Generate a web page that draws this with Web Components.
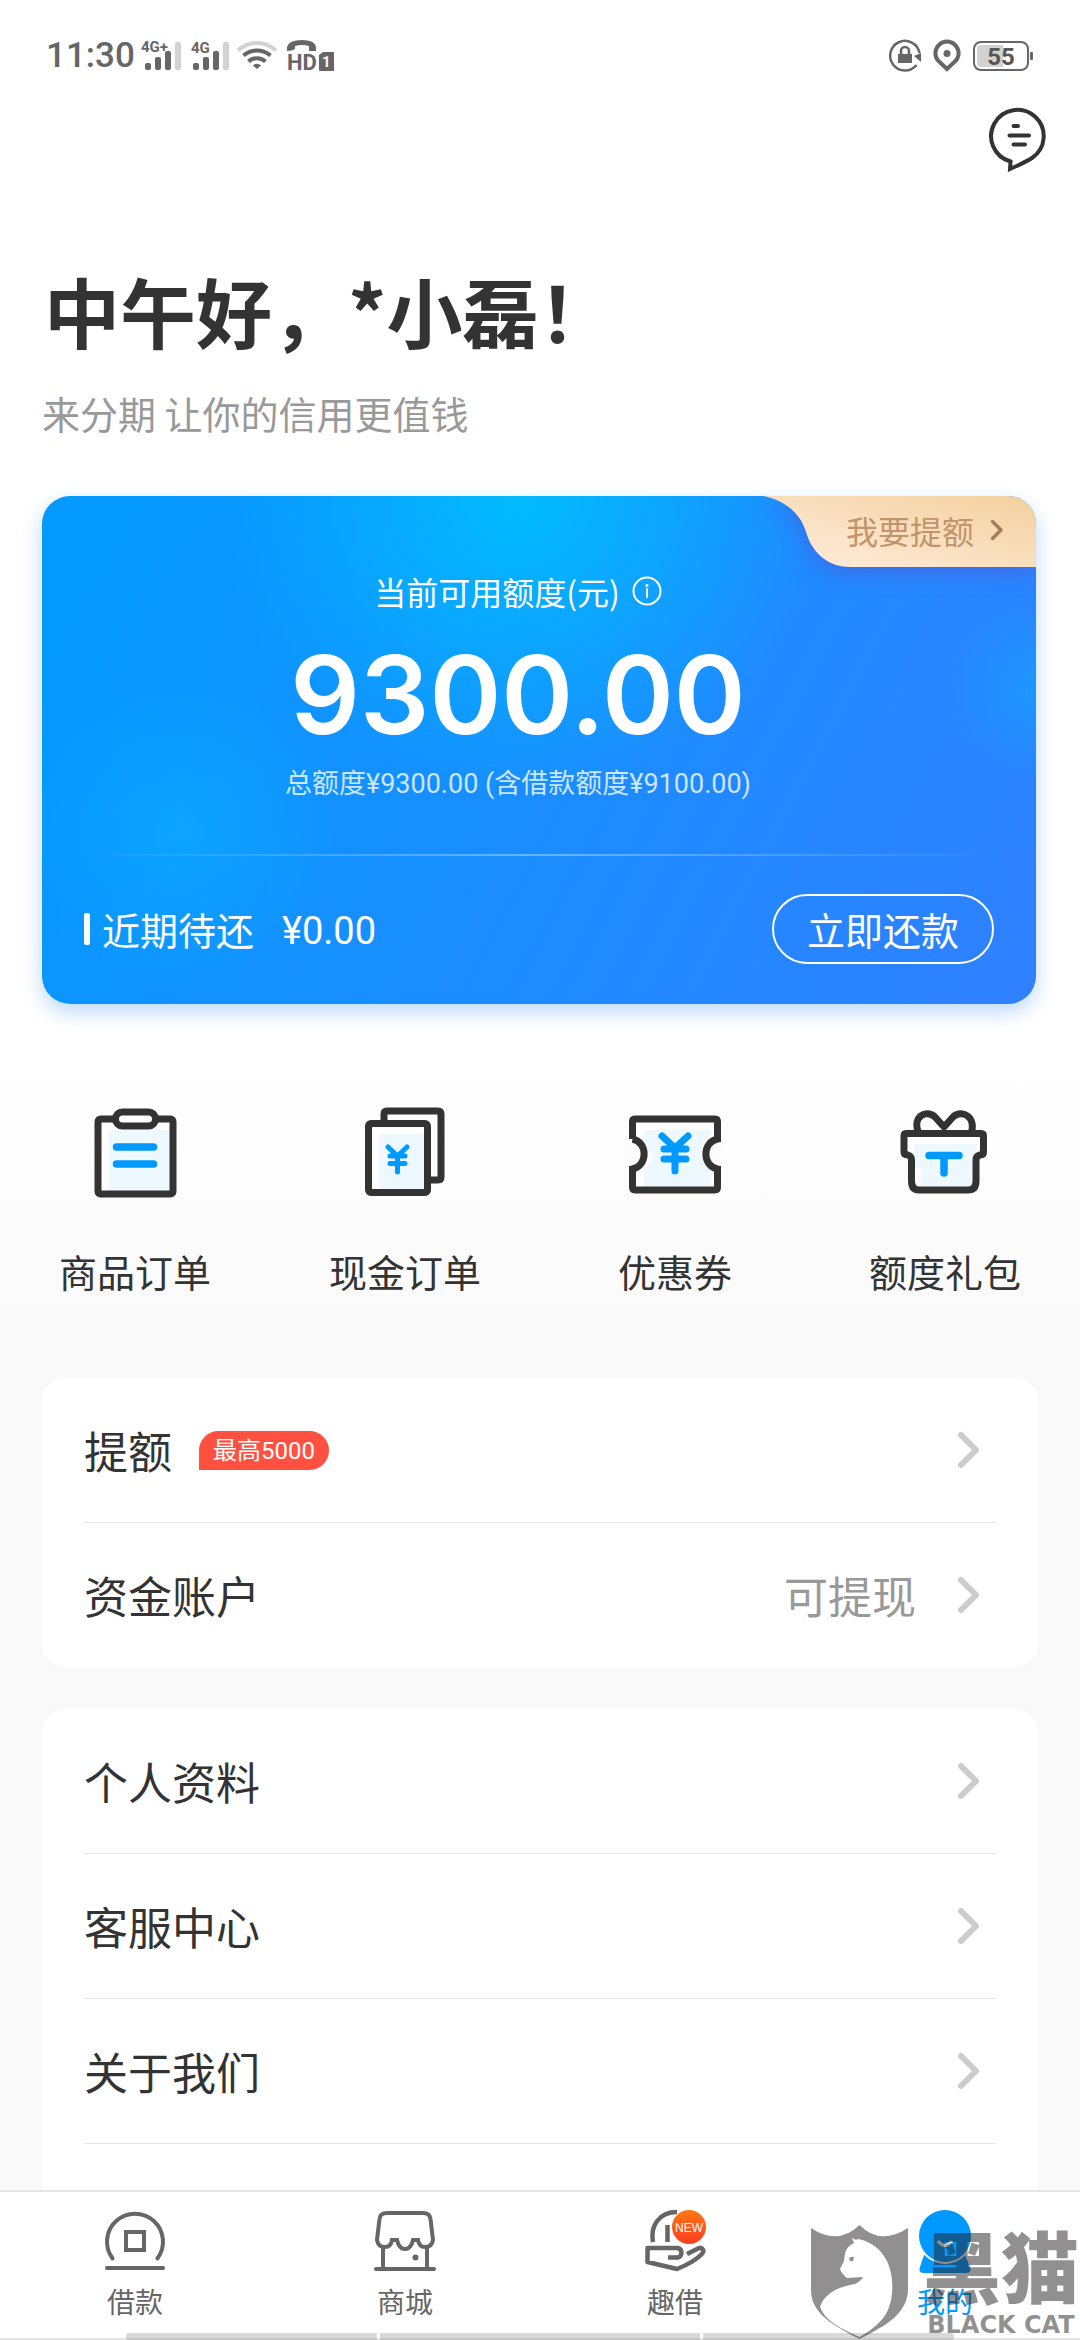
<!DOCTYPE html>
<html lang="zh-CN">
<head>
<meta charset="utf-8">
<meta name="viewport" content="width=device-width, initial-scale=1">
<title>我的</title>
<style>
  html, body { margin: 0; height: 100%; }
  body {
    --cjk: "Noto Sans CJK SC", sans-serif;
    --mixed: Roboto, "Noto Sans CJK SC", sans-serif;
    --ink: #333;
    --muted: #999;
    --blue: #0099ff;
    font-family: var(--cjk);
    color: var(--ink);
    background: #f9f9f9;
  }
</style>
</head>
<body>
<app-screen>
  <status-bar></status-bar>
  <page-greeting>
    <span slot="title">中午好，*小磊！</span>
    <span slot="subtitle">来分期 让你的信用更值钱</span>
  </page-greeting>
  <credit-card>
    <span slot="tag">我要提额</span>
    <span slot="caption">当前可用额度(元)</span>
    <span slot="amount">9300.00</span>
    <span slot="detail">总额度¥9300.00 (含借款额度¥9100.00)</span>
    <span slot="due">近期待还</span>
    <span slot="due-amount">¥0.00</span>
    <span slot="action">立即还款</span>
  </credit-card>
  <quick-actions>
    <quick-action icon="clipboard">商品订单</quick-action>
    <quick-action icon="cash">现金订单</quick-action>
    <quick-action icon="coupon">优惠券</quick-action>
    <quick-action icon="gift">额度礼包</quick-action>
  </quick-actions>
  <menu-group>
    <menu-item>提额<span slot="badge">最高5000</span></menu-item>
    <menu-item>资金账户<span slot="value">可提现</span></menu-item>
  </menu-group>
  <menu-group>
    <menu-item>个人资料</menu-item>
    <menu-item>客服中心</menu-item>
    <menu-item>关于我们</menu-item>
    <menu-item></menu-item>
  </menu-group>
  <tab-bar slot="footer">
    <tab-item icon="loan">借款</tab-item>
    <tab-item icon="shop">商城</tab-item>
    <tab-item icon="hand">趣借</tab-item>
    <tab-item icon="me" active>我的</tab-item>
  </tab-bar>
</app-screen>

<script>
/* Each icon: [width, height, svg body]. */
const icons = {
  signalPlus: [44, 34, `<g fill="#666"><rect x="6" y="24" width="6" height="7" rx="2"/><rect x="16" y="18" width="6" height="13" rx="2"/><rect x="26" y="12" width="6" height="19" rx="2"/></g><rect x="36" y="3" width="6" height="28" rx="2" fill="#d2d2d2"/><text x="2" y="13" font-family="Roboto" font-weight="700" font-size="15" fill="#666">4G+</text>`],
  signal: [44, 34, `<g fill="#666"><rect x="6" y="24" width="6" height="7" rx="2"/><rect x="16" y="18" width="6" height="13" rx="2"/><rect x="26" y="12" width="6" height="19" rx="2"/></g><rect x="36" y="3" width="6" height="28" rx="2" fill="#d2d2d2"/><text x="4" y="14" font-family="Roboto" font-weight="700" font-size="15" fill="#666">4G</text>`],
  wifi: [46, 34, `<g fill="none" stroke-width="4"><path d="M3 11.5A28 28 0 0 1 41 11.5" stroke="#d2d2d2"/><path d="M8.500 16.5A20.5 20.5 0 0 1 35.5 16.5" stroke="#666"/><path d="M13.5 22.5A12.5 12.5 0 0 1 30.5 22.5" stroke="#666"/></g><path d="M22 30L18 26.5Q22 23 26 26.5Z" fill="#666"/>`],
  hd: [52, 34, `<path d="M2 12V8Q4 1 17 1T31 8V12H24V7Q17 5 10 7V10Q7 12 2 12Z" fill="#666"/><text x="2" y="31" font-family="Roboto" font-weight="700" font-size="22" fill="#666">HD</text><path d="M38 13H48Q49 13 49 14V31Q49 32 48 32H35Q34 32 34 31V16Z" fill="#666"/><text x="37" y="28" font-family="Roboto" font-weight="700" font-size="15" fill="#fff">1</text>`],
  lock: [34, 34, `<path d="M28.5 26A14.8 14.8 0 1 1 31.5 14" fill="none" stroke="#666" stroke-width="2.5"/><path d="M26 17L33 14V23Z" fill="#666"/><rect x="10" y="15" width="14" height="9" fill="#666"/><path d="M13 16V12A4 4 0 0 1 21 12V16" fill="none" stroke="#666" stroke-width="2.6"/>`],
  pin: [34, 34, `<path d="M17 30L8 21.5A11.6 11.6 0 1 1 26 21.5Z" fill="none" stroke="#666" stroke-width="4"/><circle cx="17" cy="14.5" r="3.5" fill="#666"/>`],
  battery: [62, 34, `<rect x="2" y="3" width="54" height="28" rx="7" fill="none" stroke="#666" stroke-width="2"/><path d="M9 6H31V28H9Q5 28 5 24V10Q5 6 9 6Z" fill="#d2d2d2"/><rect x="58" y="13" width="3" height="8" rx="1" fill="#666"/><text x="29" y="26" text-anchor="middle" font-family="Roboto" font-weight="700" font-size="24" fill="#555">55</text>`],
  message: [58, 64, `<path d="M21.5 53.5A26.3 26.3 0 1 1 43 50Q36 54.5 21 61Z" fill="none" stroke="#333" stroke-width="4"/><path d="M24.5 18H29M20.5 27.5H40M24.5 36.5H36" stroke="#333" stroke-width="4" stroke-linecap="round"/>`],
  info: [30, 30, `<circle cx="15" cy="15" r="13.5" fill="none" stroke="#fff" stroke-width="2"/><path d="M15 13V21" stroke="#fff" stroke-width="2" stroke-linecap="round"/><circle cx="15" cy="9.5" r="1.5" fill="#fff"/>`],
  small: [14, 22, `<path d="M2.5 2.5L11 11L2.5 19.5" fill="none" stroke="#a57d5d" stroke-width="3.5" stroke-linecap="round" stroke-linejoin="round"/>`],
  chevron: [22, 36, `<path d="M3 3L18 18L3 33" fill="none" stroke="#ccc" stroke-width="6" stroke-linecap="round" stroke-linejoin="round"/>`],
  clipboard: [96, 96, `<g transform="translate(1.5 0)"><path d="M13 18H81V87H13Z" fill="#fff" opacity=".6"/><rect x="20" y="26" width="61" height="62" fill="#eef8ff"/><rect x="9.5" y="15" width="75" height="75" rx="2.5" fill="none" stroke="#333" stroke-width="7"/><rect x="27" y="8" width="40" height="14" rx="7" fill="#fff" stroke="#333" stroke-width="7"/><path d="M28 43H65M28 60H65" stroke="#09f" stroke-width="7.5" stroke-linecap="round"/></g>`],
  cash: [96, 96, `<g transform="translate(2 0)"><path d="M25 16V10Q25 7 28 7H79Q82 7 82 10V73Q82 76 79 76H69" fill="#fff" stroke="#333" stroke-width="7"/><path d="M13 22H66V86H13Z" fill="#fff"/><path d="M20 30H66V86H20Z" fill="#eef8ff"/><rect x="9.5" y="19.5" width="59" height="69" rx="2.5" fill="none" stroke="#333" stroke-width="7"/><path d="M29 43L38.5 52L48 43M38.5 52V68M31 52H46M31 59.5H46" fill="none" stroke="#09f" stroke-width="5" stroke-linecap="round"/></g>`],
  coupon: [96, 96, `<path d="M10 22H86V85H10Z" fill="#fff" opacity=".6"/><path d="M21 26H84V32C71 38 71 56 84 62V84H17V65Q27 58 25 50L17 40V30Q17 26 21 26Z" fill="#eef8ff"/><path d="M5.5 35V17.5Q5.5 15 8 15H88Q90.5 15 90.5 17.5V35C75 38 75 62 90.5 65V83Q90.5 86 88 86H8Q5.5 86 5.5 83V65C21 62 21 38 5.5 35" fill="none" stroke="#333" stroke-width="7"/><path d="M2 39C15 41 15 59 2 62ZM94 39C81 41 81 59 94 62Z" fill="#fcfcfc"/><path d="M35 32L48 44L61 32M48 44V67M37 45H59M37 55H59" fill="none" stroke="#09f" stroke-width="7" stroke-linecap="round"/>`],
  gift: [96, 96, `<g transform="translate(-3 0)"><path d="M12 30H84V45L78 48V85H20V48L12 45Z" fill="#fff" opacity=".6"/><path d="M23 40H82V48L78 54V83H27V64H20V43Q20 40 23 40Z" fill="#eef8ff"/><path d="M25 30C17 12 33 5 41 13L50 23L59 13C67 5 83 12 77 30" fill="#fff" stroke="#333" stroke-width="7" stroke-linejoin="round"/><path d="M12 29.5H87Q89.5 29.5 89.5 32V48Q89.5 51 86 51Q82 52 82 56V77Q82 86 74 86H25Q17.5 86 17.5 77V56Q17.5 52 14 51Q10 51 10 48V32Q10 29.5 12 29.5Z" fill="none" stroke="#333" stroke-width="7"/><path d="M35 51.5H65M50 52V69" stroke="#09f" stroke-width="7.5" stroke-linecap="round"/></g>`],
  loan: [64, 64, `<path d="M9.600 50.5A28 28 0 1 1 54.4 50.5" fill="none" stroke="#666" stroke-width="4" stroke-linecap="round"/><rect x="23" y="24" width="18" height="18" fill="none" stroke="#666" stroke-width="4"/><path d="M4 60H60" stroke="#666" stroke-width="4" stroke-linecap="round"/>`],
  shop: [64, 64, `<g fill="none" stroke="#666" stroke-width="4"><path d="M14 5H50Q57 5 57.5 11L60 32Q59 39 52 39Q46 39 45 32H40Q38 41 32 41T24 32H19Q18 39 12 39Q5 39 4 32L6.5 11Q7 5 14 5Z"/><path d="M10 39V60M54 39V60"/><path d="M3 61H61" stroke-linecap="round"/></g><circle cx="42.5" cy="49.5" r="3" fill="#666"/>`],
  hand: [64, 64, `<defs><linearGradient id="n" x1="0" y1="0" x2="0" y2="1"><stop stop-color="#ff7a14"/><stop offset="1" stop-color="#ff3b20"/></linearGradient></defs><g fill="none" stroke="#666" stroke-width="4.5"><path d="M10 34C7 18 16 4 34 4M24.5 17V34"/><path d="M25 49.5H35A5 5 0 0 0 35 40H4.5V54L34 61C44 57 52 53 59 46C62 42 59 38 54 41L44 46" stroke-linejoin="round"/></g><circle cx="46" cy="19" r="17" fill="url(#n)"/><text x="46" y="24" text-anchor="middle" font-family="Liberation Sans" font-size="12" fill="#fff">NEW</text>`],
  me: [64, 66, `<path d="M11 47L7 59Q5 65 11 65H53Q59 65 57 59L52 47Z" fill="#09f"/><circle cx="32" cy="28" r="28" fill="#fff"/><circle cx="32" cy="28" r="26" fill="#09f"/><path d="M25 33Q32 42 39 33" fill="none" stroke="#fff" stroke-width="3"/>`],
  shield: [100, 116, `<path fill-rule="evenodd" fill="rgba(35,31,32,.5)" d="M1 4Q28 22 49.5 1Q70 22 98 4V66C97 88 80 100 49.5 115C20 100 1 88 1 66ZM42 14L44 19C34 24 35 31 34 37L30 45Q31 49 37 54L53 53Q50 58 45 60C27 63 14 70 10 83C16 98 32 105 49.5 113C62 106 73 97 78 86C84 72 84 52 77 37C71 26 63 18 48 15L46 16ZM44 33Q40 32 39 35Q40 38 43 37Z"/>`]
};

/* Registers an element whose shadow root is cloned from a template.
   A host's "icon" attribute is handed to the icon inside it. */
const define = (name, html) => {
  const template = document.createElement('template');
  template.innerHTML = html;
  customElements.define(name, class extends HTMLElement {
    constructor() {
      super();
      this.attachShadow({ mode: 'open' }).append(template.content.cloneNode(true));
    }
    connectedCallback() {
      if (this.hasAttribute('icon')) {
        this.shadowRoot.querySelector('app-icon').setAttribute('name', this.getAttribute('icon'));
      }
    }
  });
};

customElements.define('app-icon', class extends HTMLElement {
  static observedAttributes = ['name'];
  constructor() {
    super();
    this.attachShadow({ mode: 'open' });
  }
  attributeChangedCallback(attribute, previous, name) {
    const icon = icons[name];
    if (!icon) return;
    const [w, h, body] = icon;
    this.shadowRoot.innerHTML = `<style>:host{display:block;flex:none}svg{display:block;overflow:visible}</style>
      <svg aria-hidden="true" width="${w}" height="${h}" viewBox="0 0 ${w} ${h}">${body}</svg>`;
  }
});

define('app-screen', `
<style>
  :host { display: flex; flex-direction: column; height: 100vh; }
  main { flex: 1; min-height: 0; overflow: hidden; display: flex; flex-direction: column;
         background: linear-gradient(#fff 1040px, #f9f9f9 1378px); }
</style>
<main><slot></slot></main>
<slot name="footer"></slot>`);

define('status-bar', `
<style>
  :host { display: flex; flex: none; justify-content: space-between; align-items: center; height: 40px; padding: 36px 46px 32px;
          font: 500 35px/40px Roboto, sans-serif; color: #666; }
  div { display: flex; align-items: center; }
  .left { gap: 4px; } .right { gap: 8px; }
</style>
<div class="left"><span>11:30</span><app-icon name="signalPlus"></app-icon><app-icon name="signal"></app-icon><app-icon name="wifi"></app-icon><app-icon name="hd"></app-icon></div>
<div class="right"><app-icon name="lock"></app-icon><app-icon name="pin"></app-icon><app-icon name="battery"></app-icon></div>`);

define('page-greeting', `
<style>
  :host { display: flex; flex: none; flex-direction: column; padding: 0 33px 56px 42px; }
  button { align-self: flex-end; padding: 0; border: 0; background: none; }
  h1 { margin: 94px 0 0; padding-left: 2px; font-size: 76px; line-height: 88px; font-weight: 700; }
  p { margin: 32px 0 0; font-size: 38px; line-height: 54px; color: var(--muted); }
</style>
<button aria-label="消息"><app-icon name="message"></app-icon></button>
<h1><slot name="title"></slot></h1>
<p><slot name="subtitle"></slot></p>`);

define('credit-card', `
<style>
  :host { display: block; flex: none; position: relative; margin: 0 44px 0 42px; border-radius: 28px; color: #fff;
    box-shadow: 0 8px 20px rgba(32,128,240,.3);
    background:
      radial-gradient(circle 300px at 48% 0, rgba(0,190,255,.95), rgba(0,180,255,0)),
      radial-gradient(circle 160px at 14% 66%, rgba(12,170,255,.7), rgba(12,168,255,0)),
      radial-gradient(circle 90px at 100% 38%, rgba(26,156,255,.8), rgba(26,156,255,0)),
      linear-gradient(118deg, #0499ff 8%, #1f8aff 62%, #3080ff 100%); }
  .clip { position: absolute; inset: 0; overflow: hidden; border-radius: 28px; pointer-events: none; }
  .clip svg { position: absolute; right: 0; top: 0; filter: drop-shadow(0 6px 10px rgba(80,90,210,.6)); }
  .tag { position: absolute; top: 0; right: 0; display: flex; align-items: center; gap: 16px; padding: 0 32px 0 84px; height: 68px;
         font-size: 32px; color: #c2946c; text-decoration: none; }
  .hero { display: flex; flex-direction: column; align-items: center; padding: 73px 42px 50px 0; }
  .caption { display: flex; align-items: center; gap: 12px; font-size: 32px; line-height: 44px; }
  .amount { margin-top: 31px; font: 600 109px/100px Inter, sans-serif; }
  .detail { margin-top: 20px; font-family: var(--mixed); font-size: 27px; line-height: 40px; color: rgba(255,255,255,.78); }
  hr { height: 2px; margin: 0 28px; border: 0; background: linear-gradient(90deg, rgba(255,255,255,0), rgba(150,210,255,.6) 50%, rgba(255,255,255,0)); }
  .foot { display: flex; align-items: center; padding: 38px 42px 40px; font-size: 38px; line-height: 54px; }
  .foot i { width: 6px; height: 32px; border-radius: 2px; background: #fff; }
  .due { margin: 0 28px 0 12px; }
  .sum { padding-top: 4px; font-family: Roboto, sans-serif; }
  button { margin-left: auto; width: 222px; height: 70px; padding: 0; border: 2px solid #fff; border-radius: 35px; background: none; color: #fff; font: inherit; }
</style>
<div class="clip"><svg width="273" height="72" viewBox="0 0 273 72" aria-hidden="true">
  <defs><linearGradient id="g" x1="0" y1="1" x2="1" y2="0"><stop offset=".2" stop-color="#fde8d2"/><stop offset="1" stop-color="#f3d09e"/></linearGradient></defs>
  <path d="M0 0C22 4 38 18 43 36C50 60 68 71 87 71H273V0Z" fill="url(#g)"/></svg></div>
<a class="tag" href="#raise"><slot name="tag"></slot><app-icon name="small"></app-icon></a>
<div class="hero">
  <div class="caption"><slot name="caption"></slot><app-icon name="info"></app-icon></div>
  <div class="amount"><slot name="amount"></slot></div>
  <div class="detail"><slot name="detail"></slot></div>
</div>
<hr>
<div class="foot"><i></i><span class="due"><slot name="due"></slot></span><span class="sum"><slot name="due-amount"></slot></span>
<button><slot name="action"></slot></button></div>`);

define('quick-actions', `
<style>:host { display: grid; flex: none; grid-template-columns: repeat(4, 1fr); padding: 100px 0 80px; }</style><slot></slot>`);

define('quick-action', `
<style>
  :host { display: block; }
  a { display: flex; flex-direction: column; align-items: center; gap: 44px; color: inherit; text-decoration: none; font-size: 38px; line-height: 54px; }
</style><a href="#open"><app-icon></app-icon><span><slot></slot></span></a>`);

define('menu-group', `
<style>:host { display: block; flex: none; margin: 0 42px 42px; padding: 0 42px; border-radius: 22px; background: #fff; }
::slotted(menu-item:not(:first-child)) { border-top: 1px solid #e5e5e5; }</style><slot></slot>`);

define('menu-item', `
<style>
  :host { display: block; }
  a { display: flex; align-items: center; height: 144px; padding-right: 16px; color: inherit; text-decoration: none; font-size: 44px; line-height: 60px; }
  ::slotted([slot=badge]) { margin-left: 27px; padding: 2px 14px 0; border-radius: 20px 20px 20px 0; background: #ff5040; color: #fff;
     font: 24px/37px var(--mixed); }
  .value { margin-left: auto; padding-right: 42px; color: var(--muted); }
</style><a href="#menu"><slot></slot><slot name="badge"></slot><span class="value"><slot name="value"></slot></span><app-icon name="chevron"></app-icon></a>`);

define('tab-bar', `
<style>
  :host { display: block; flex: none; position: relative; border-top: 2px solid #e5e5e5; background: #fff; }
  nav { display: grid; grid-template-columns: repeat(4, 1fr); padding: 16px 0 20px; }
  .home { position: absolute; left: 126px; right: 126px; bottom: 0; height: 7px; display: grid; grid-template-columns: 251fr 320fr 251fr; gap: 3px; }
  .home i { background: linear-gradient(#d8d8d8 5px, #c6c6c6 5px); }
  .home i:first-child { border-radius: 4px 0 0 4px; }
  .home i:last-child { border-radius: 0 4px 4px 0; }
  .edge { position: absolute; left: 0; right: 0; bottom: 0; height: 2px; background: #e5e5e5; }
  brand-watermark { position: absolute; right: 1px; bottom: 0; }
</style>
<nav><slot></slot></nav><div class="edge"></div><div class="home"><i></i><i></i><i></i></div><brand-watermark></brand-watermark>`);

define('tab-item', `
<style>
  :host { display: block; color: #666; }
  :host([active]) { color: var(--blue); }
  a { display: flex; flex-direction: column; align-items: center; color: inherit; text-decoration: none; font-size: 28px; line-height: 38px; }
  app-icon { height: 64px; margin-bottom: 10px; }
</style><a href="#tab"><app-icon></app-icon><span><slot></slot></span></a>`);

define('brand-watermark', `
<style>
  :host { display: flex; align-items: flex-end; gap: 13px; color: rgba(35,31,32,.5); pointer-events: none; }
  div { display: flex; flex-direction: column; align-items: center; gap: 8px; padding-bottom: 2px; }
  b { font: 900 78px/80px var(--cjk); }
  strong { font: 700 24px/26px "DejaVu Sans", sans-serif; }
</style><app-icon name="shield"></app-icon><div><b>黑猫</b><strong>BLACK CAT</strong></div>`);
</script>
</body>
</html>
